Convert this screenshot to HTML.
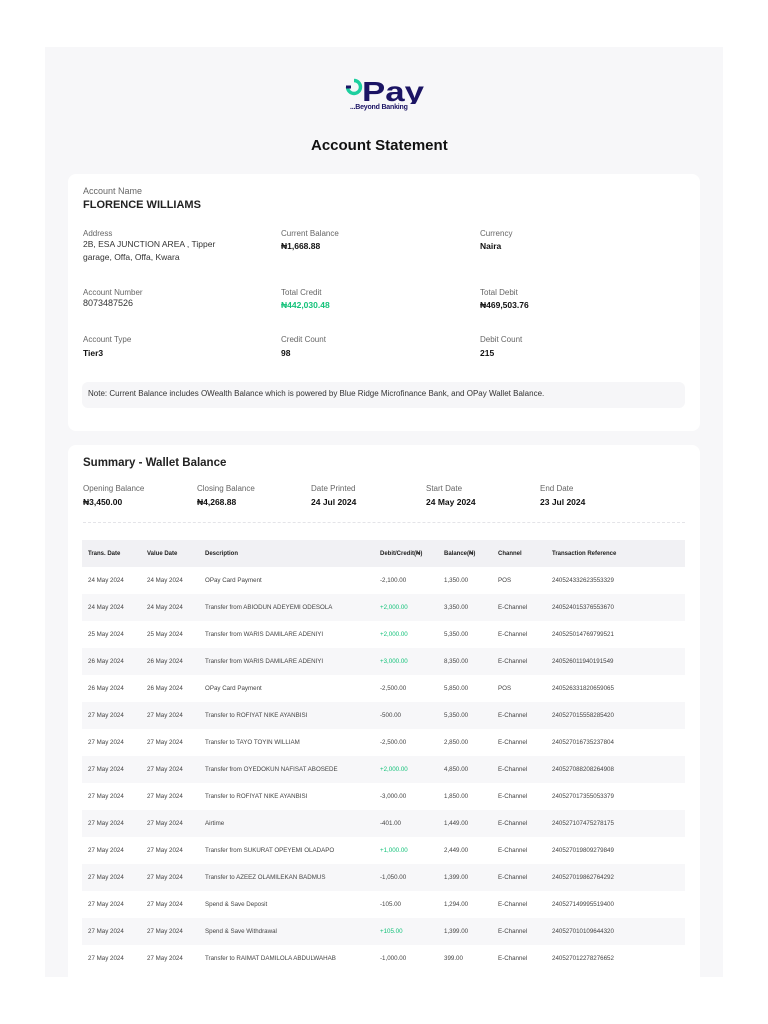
<!DOCTYPE html>
<html><head><meta charset="utf-8"><style>
*{margin:0;padding:0;box-sizing:border-box}
body{width:768px;height:1024px;background:#fff;font-family:"Liberation Sans",sans-serif;position:relative;overflow:hidden;color:#111}
.panel{position:absolute;left:45px;top:47px;width:678px;height:930px;background:#f7f7f9}
.card{position:absolute;left:68px;width:632px;background:#fff;border-radius:8px}
.a{position:absolute;white-space:nowrap}
.lb{font-size:8px;color:#666}
.v{font-size:8.5px;font-weight:bold;color:#111}
.g{color:#14c27a}
table{position:absolute;left:82px;top:540px;width:603px;border-collapse:collapse;font-size:6.2px;color:#444}
td,th{height:27px;text-align:left;padding:0;white-space:nowrap}
th{background:#f1f1f4;font-weight:bold;color:#222;font-size:6px}
tr:nth-child(odd) td{background:#f7f7f9}
</style></head><body>
<div class="panel"></div>
<svg class="a" style="left:345px;top:76px" width="82" height="28" viewBox="0 0 82 28">
<path d="M9 4.5 A6.5 6.5 0 1 1 2.5 11" fill="none" stroke="#1dcf9f" stroke-width="3.4"/>
<rect x="1" y="9.5" width="5" height="3" fill="#1b1464"/>
<text x="17" y="25" font-family="Liberation Sans" font-weight="bold" font-size="28" fill="#1b1464" textLength="62" lengthAdjust="spacingAndGlyphs">Pay</text>
</svg>
<div class="a" style="left:350px;top:104px;font-size:7px;font-weight:bold;color:#1b1464;letter-spacing:-0.2px">...Beyond Banking</div>
<div class="a" style="left:311px;top:137px;font-size:15px;font-weight:bold;color:#111">Account Statement</div>

<div class="card" style="top:174px;height:257px"></div>
<div class="a lb" style="left:83px;top:186px;font-size:9px">Account Name</div>
<div class="a" style="left:83px;top:199px;font-size:11px;font-weight:bold;color:#222">FLORENCE WILLIAMS</div>
<div class="a lb" style="left:83px;top:229px">Address</div>
<div class="a" style="left:83px;top:238px;font-size:8.5px;color:#333;line-height:13px">2B, ESA JUNCTION AREA , Tipper<br>garage, Offa, Offa, Kwara</div>
<div class="a lb" style="left:281px;top:229px">Current Balance</div>
<div class="a v" style="left:281px;top:241px">₦1,668.88</div>
<div class="a lb" style="left:480px;top:229px">Currency</div>
<div class="a v" style="left:480px;top:241px">Naira</div>
<div class="a lb" style="left:83px;top:288px">Account Number</div>
<div class="a" style="left:83px;top:298px;font-size:9px;color:#333">8073487526</div>
<div class="a lb" style="left:281px;top:288px">Total Credit</div>
<div class="a v g" style="left:281px;top:300px">₦442,030.48</div>
<div class="a lb" style="left:480px;top:288px">Total Debit</div>
<div class="a v" style="left:480px;top:300px">₦469,503.76</div>
<div class="a lb" style="left:83px;top:335px">Account Type</div>
<div class="a v" style="left:83px;top:348px">Tier3</div>
<div class="a lb" style="left:281px;top:335px">Credit Count</div>
<div class="a v" style="left:281px;top:348px">98</div>
<div class="a lb" style="left:480px;top:335px">Debit Count</div>
<div class="a v" style="left:480px;top:348px">215</div>
<div class="a" style="left:82px;top:382px;width:603px;height:26px;background:#f6f6f8;border-radius:6px;font-size:8px;color:#333;padding:7px 6px">Note: Current Balance includes OWealth Balance which is powered by Blue Ridge Microfinance Bank, and OPay Wallet Balance.</div>

<div class="card" style="top:445px;height:532px;border-radius:8px 8px 0 0"></div>
<div class="a" style="left:83px;top:457px;font-size:11.5px;font-weight:bold;color:#222">Summary - Wallet Balance</div>
<div class="a lb" style="left:83px;top:484px">Opening Balance</div>
<div class="a v" style="left:83px;top:497px">₦3,450.00</div>
<div class="a lb" style="left:197px;top:484px">Closing Balance</div>
<div class="a v" style="left:197px;top:497px">₦4,268.88</div>
<div class="a lb" style="left:311px;top:484px">Date Printed</div>
<div class="a v" style="left:311px;top:497px">24 Jul 2024</div>
<div class="a lb" style="left:426px;top:484px">Start Date</div>
<div class="a v" style="left:426px;top:497px">24 May 2024</div>
<div class="a lb" style="left:540px;top:484px">End Date</div>
<div class="a v" style="left:540px;top:497px">23 Jul 2024</div>
<div class="a" style="left:83px;top:522px;width:602px;border-top:1px dashed #e4e4e8"></div>

<table>
<colgroup><col style="width:65px"><col style="width:58px"><col style="width:175px"><col style="width:64px"><col style="width:54px"><col style="width:54px"><col></colgroup>
<tr><th style="padding-left:6px">Trans. Date</th><th>Value Date</th><th>Description</th><th>Debit/Credit(₦)</th><th>Balance(₦)</th><th>Channel</th><th>Transaction Reference</th></tr>
<tr><td style="padding-left:6px">24 May 2024</td><td>24 May 2024</td><td>OPay Card Payment</td><td>-2,100.00</td><td>1,350.00</td><td>POS</td><td>240524332623553329</td></tr>
<tr><td style="padding-left:6px">24 May 2024</td><td>24 May 2024</td><td>Transfer from ABIODUN ADEYEMI ODESOLA</td><td class="g">+2,000.00</td><td>3,350.00</td><td>E-Channel</td><td>240524015376553670</td></tr>
<tr><td style="padding-left:6px">25 May 2024</td><td>25 May 2024</td><td>Transfer from WARIS DAMILARE ADENIYI</td><td class="g">+2,000.00</td><td>5,350.00</td><td>E-Channel</td><td>240525014769799521</td></tr>
<tr><td style="padding-left:6px">26 May 2024</td><td>26 May 2024</td><td>Transfer from WARIS DAMILARE ADENIYI</td><td class="g">+3,000.00</td><td>8,350.00</td><td>E-Channel</td><td>240526011940191549</td></tr>
<tr><td style="padding-left:6px">26 May 2024</td><td>26 May 2024</td><td>OPay Card Payment</td><td>-2,500.00</td><td>5,850.00</td><td>POS</td><td>240526331820659065</td></tr>
<tr><td style="padding-left:6px">27 May 2024</td><td>27 May 2024</td><td>Transfer to ROFIYAT NIKE AYANBISI</td><td>-500.00</td><td>5,350.00</td><td>E-Channel</td><td>240527015558285420</td></tr>
<tr><td style="padding-left:6px">27 May 2024</td><td>27 May 2024</td><td>Transfer to TAYO TOYIN WILLIAM</td><td>-2,500.00</td><td>2,850.00</td><td>E-Channel</td><td>240527016735237804</td></tr>
<tr><td style="padding-left:6px">27 May 2024</td><td>27 May 2024</td><td>Transfer from OYEDOKUN NAFISAT ABOSEDE</td><td class="g">+2,000.00</td><td>4,850.00</td><td>E-Channel</td><td>240527088208264908</td></tr>
<tr><td style="padding-left:6px">27 May 2024</td><td>27 May 2024</td><td>Transfer to ROFIYAT NIKE AYANBISI</td><td>-3,000.00</td><td>1,850.00</td><td>E-Channel</td><td>240527017355053379</td></tr>
<tr><td style="padding-left:6px">27 May 2024</td><td>27 May 2024</td><td>Airtime</td><td>-401.00</td><td>1,449.00</td><td>E-Channel</td><td>240527107475278175</td></tr>
<tr><td style="padding-left:6px">27 May 2024</td><td>27 May 2024</td><td>Transfer from SUKURAT OPEYEMI OLADAPO</td><td class="g">+1,000.00</td><td>2,449.00</td><td>E-Channel</td><td>240527019809279849</td></tr>
<tr><td style="padding-left:6px">27 May 2024</td><td>27 May 2024</td><td>Transfer to AZEEZ OLAMILEKAN BADMUS</td><td>-1,050.00</td><td>1,399.00</td><td>E-Channel</td><td>240527019862764292</td></tr>
<tr><td style="padding-left:6px">27 May 2024</td><td>27 May 2024</td><td>Spend &amp; Save Deposit</td><td>-105.00</td><td>1,294.00</td><td>E-Channel</td><td>240527149995519400</td></tr>
<tr><td style="padding-left:6px">27 May 2024</td><td>27 May 2024</td><td>Spend &amp; Save Withdrawal</td><td class="g">+105.00</td><td>1,399.00</td><td>E-Channel</td><td>240527010109644320</td></tr>
<tr><td style="padding-left:6px">27 May 2024</td><td>27 May 2024</td><td>Transfer to RAIMAT DAMILOLA ABDULWAHAB</td><td>-1,000.00</td><td>399.00</td><td>E-Channel</td><td>240527012278276652</td></tr>
</table>
</body></html>
